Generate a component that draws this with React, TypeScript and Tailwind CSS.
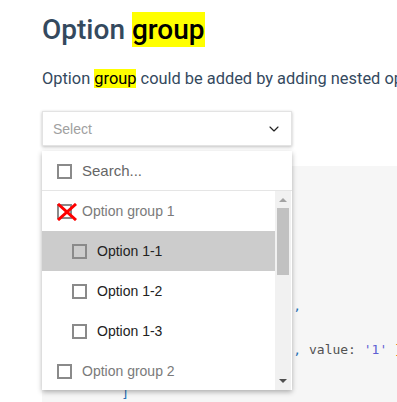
import { ChevronDown } from "lucide-react";

const codeLines: { t: string; c: string }[][] = [
  [{ t: "<script setup>", c: "text-[#2973b7]" }],
  [{ t: "const value = ref([])", c: "text-[#525252]" }],
  [{ t: "", c: "" }],
  [{ t: "const options = [", c: "text-[#525252]" }],
  [{ t: "  {", c: "text-[#2973b7]" }],
  [
    { t: "    label: ", c: "text-[#525252]" },
    { t: "'Option group 1'", c: "text-[#5f5fd3]" },
    { t: ",", c: "text-[#2973b7]" },
  ],
  [{ t: "    options: [", c: "text-[#525252]" }],
  [
    { t: "      { label: ", c: "text-[#525252]" },
    { t: "'Option 1-1'", c: "text-[#5f5fd3]" },
    { t: ",", c: "text-[#2973b7]" },
    { t: " value: ", c: "text-[#525252]" },
    { t: "'1'", c: "text-[#5f5fd3]" },
    { t: " }", c: "text-[#e96900]" },
  ],
  [{ t: "      { value: '2' }", c: "text-[#525252]" }],
  [{ t: "     ]", c: "text-[#2973b7]" }],
];

function Box({ checked, className }: { checked?: boolean; className?: string }) {
  return (
    <span className={`relative inline-block w-[15px] h-[15px] border-2 border-[#8a8a8a] shrink-0 ${className ?? ""}`}>
      {checked && (
        <svg className="absolute left-[-2px] top-[-3px]" width="21" height="18" viewBox="0 0 21 18">
          <path d="M1 1 L19 17 M19 1 L1 17" stroke="#ff0000" strokeWidth="3" fill="none" />
        </svg>
      )}
    </span>
  );
}

export default function App() {
  return (
    <div className="bg-white min-h-screen w-[397px] h-[402px] overflow-hidden font-['Roboto',sans-serif] text-[#34495e]">
      <div className="pl-[42px] pt-[13px]">
        {/* Title */}
        <h1 className="text-[28px] font-medium leading-[34px] whitespace-nowrap">
          Option <mark className="bg-[#ffff00] text-black py-[1px]">group</mark>
        </h1>

        {/* Description */}
        <p className="mt-[22px] text-[16.4px] leading-[20px] whitespace-nowrap">
          Option <mark className="bg-[#ffff00] text-black">group</mark> could be added by adding nested options
        </p>

        {/* Select */}
        <div className="relative mt-[22px] w-[250px]">
          <div className="h-[35px] border border-[#e3e3e3] bg-white shadow-[0_1px_3px_rgba(0,0,0,0.25)] flex items-center justify-between pl-[10px] pr-[9px]">
            <span className="font-['Liberation_Sans',Arial,sans-serif] text-[14px] text-[#a0a0a0] pt-[2px]">Select</span>
            <ChevronDown className="w-[16px] h-[16px] text-[#222]" strokeWidth={1.75} />
          </div>

          {/* Dropdown */}
          <div className="absolute z-10 left-0 top-[40px] w-[250px] bg-white shadow-[0_2px_5px_rgba(0,0,0,0.3)] font-['Liberation_Sans',Arial,sans-serif]">
            <div className="h-[40px] flex items-center pl-[15px] pt-[1px] gap-[10px] border-b border-[#e5e5e5]">
              <Box />
              <span className="text-[15px] text-[#666]">Search...</span>
            </div>
            <div className="flex h-[199px]">
              <div className="flex-1 flex flex-col text-[14px]">
                <div className="h-[40px] flex items-center pl-[15px] gap-[10px] text-[#7a7a7a]">
                  <Box checked />
                  <span>Option group 1</span>
                </div>
                <div className="h-[40px] flex items-center pl-[30px] gap-[10px] bg-[#cccccc] text-[#222]">
                  <Box />
                  <span>Option 1-1</span>
                </div>
                <div className="h-[40px] flex items-center pl-[30px] gap-[10px] text-[#222]">
                  <Box />
                  <span>Option 1-2</span>
                </div>
                <div className="h-[40px] flex items-center pl-[30px] gap-[10px] text-[#222]">
                  <Box />
                  <span>Option 1-3</span>
                </div>
                <div className="h-[39px] flex items-center pl-[15px] pt-[2px] gap-[10px] text-[#7a7a7a]">
                  <Box />
                  <span>Option group 2</span>
                </div>
              </div>
              {/* Scrollbar */}
              <div className="w-[16px] mr-[1px] bg-[#f1f1f1] flex flex-col items-center">
                <div className="h-[17px] flex items-center justify-center">
                  <span className="w-0 h-0 border-l-[4px] border-r-[4px] border-b-[4px] border-l-transparent border-r-transparent border-b-[#a3a3a3]" />
                </div>
                <div className="w-[12px] h-[67px] bg-[#c1c1c1]" />
                <div className="flex-1" />
                <div className="h-[18px] flex items-center justify-center">
                  <span className="w-0 h-0 border-l-[4px] border-r-[4px] border-t-[4px] border-l-transparent border-r-transparent border-t-[#505050]" />
                </div>
              </div>
            </div>
          </div>
        </div>

        {/* Code block */}
        <pre className="mt-[20px] bg-[#f6f6f6] pl-[40px] pt-[19px] pb-4 font-['DejaVu_Sans_Mono',monospace] text-[13px] leading-[22px]">
          {codeLines.map((line, i) => (
            <div key={i} className="h-[22px] whitespace-pre">
              {line.map((s, j) => (
                <span key={j} className={s.c}>{s.t}</span>
              ))}
            </div>
          ))}
        </pre>
      </div>
    </div>
  );
}
